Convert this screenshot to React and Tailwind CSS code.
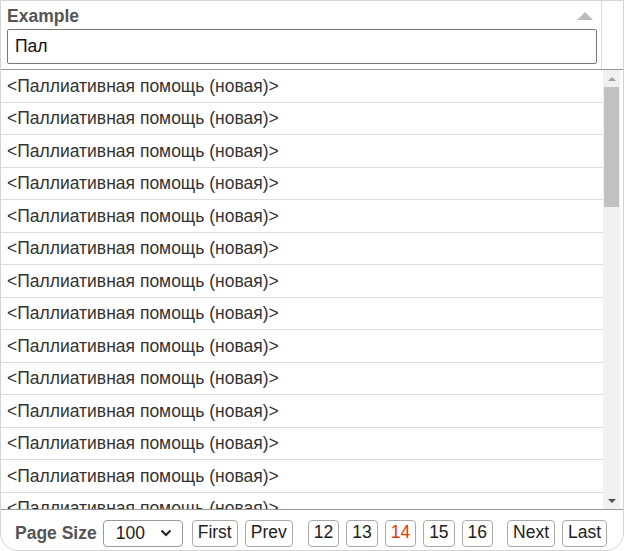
import React from "react";

const rows = Array.from({ length: 14 }, () => "<Паллиативная помощь (новая)>");

const PagerButton = ({ label, active }) => (
  <button
    className={
      "h-[27px] px-[5px] border border-[#aaa] rounded-[4px] bg-white text-[17.5px] leading-none " +
      (active ? "text-[#e03a00]" : "text-[#222]")
    }
  >
    {label}
  </button>
);

const App = () => {
  return (
    <div
      className="w-[624px] h-[551px] flex flex-col bg-white border border-[#d4d4d4] rounded-b-[18px] overflow-hidden text-[17.5px]"
      style={{ fontFamily: '"Liberation Sans", Arial, sans-serif' }}
    >
      {/* header */}
      <div className="flex h-[69px] border-b border-[#999]">
        <div className="flex-1 flex flex-col pl-[6px] pr-[4px] pt-[4px] border-r border-[#ddd]">
          <div className="flex items-center justify-between h-[22px]">
            <span className="font-bold text-[#555]">Example</span>
            <span className="w-0 h-0 mr-[4px] border-l-[8px] border-r-[8px] border-b-[8px] border-l-transparent border-r-transparent border-b-[#bbb]"></span>
          </div>
          <div className="mt-[2px] h-[35px] border border-[#777] rounded-[2px] flex items-center px-[7px] text-[#111]">
            Пал
          </div>
        </div>
        <div className="w-[21px]"></div>
      </div>

      {/* list */}
      <div className="flex h-[439px]">
        <div className="flex-1 overflow-hidden">
          {rows.map((r, i) => (
            <div
              key={i}
              className="h-[32.5px] shrink-0 flex items-center pl-[6px] border-b border-[#ddd] text-[#333]"
            >
              {r}
            </div>
          ))}
        </div>
        <div className="w-[17px] mr-[3px] bg-[#f0f0f0] flex flex-col items-center">
          <div className="h-[17px] flex items-center justify-center">
            <span className="w-0 h-0 border-l-[4px] border-r-[4px] border-b-[4px] border-l-transparent border-r-transparent border-b-[#a3a3a3]"></span>
          </div>
          <div className="w-[15px] h-[120px] bg-[#c1c1c1]"></div>
          <div className="flex-1"></div>
          <div className="h-[17px] flex items-center justify-center">
            <span className="w-0 h-0 border-l-[4px] border-r-[4px] border-t-[4px] border-l-transparent border-r-transparent border-t-[#505050]"></span>
          </div>
        </div>
      </div>

      {/* footer */}
      <div className="flex-1 flex items-center border-t border-[#999] pl-[14px] pt-[6px]">
        <span className="font-bold text-[#555] mr-[6px]">Page Size</span>
        <div className="h-[27px] w-[80px] border border-[#999] rounded-[4px] flex items-center justify-between pl-[12px] pr-[10px] text-[#222]">
          <span>100</span>
          <svg width="12" height="8" viewBox="0 0 12 8">
            <path d="M1.5 1.5 L6 6 L10.5 1.5" stroke="#222" strokeWidth="2" fill="none" />
          </svg>
        </div>
        <div className="flex gap-[7px] ml-[9px]">
          <PagerButton label="First" />
          <PagerButton label="Prev" />
        </div>
        <div className="flex gap-[7px] ml-[15px]">
          <PagerButton label="12" />
          <PagerButton label="13" />
          <PagerButton label="14" active />
          <PagerButton label="15" />
          <PagerButton label="16" />
        </div>
        <div className="flex gap-[7px] ml-[14px]">
          <PagerButton label="Next" />
          <PagerButton label="Last" />
        </div>
      </div>
    </div>
  );
};

export default App;
